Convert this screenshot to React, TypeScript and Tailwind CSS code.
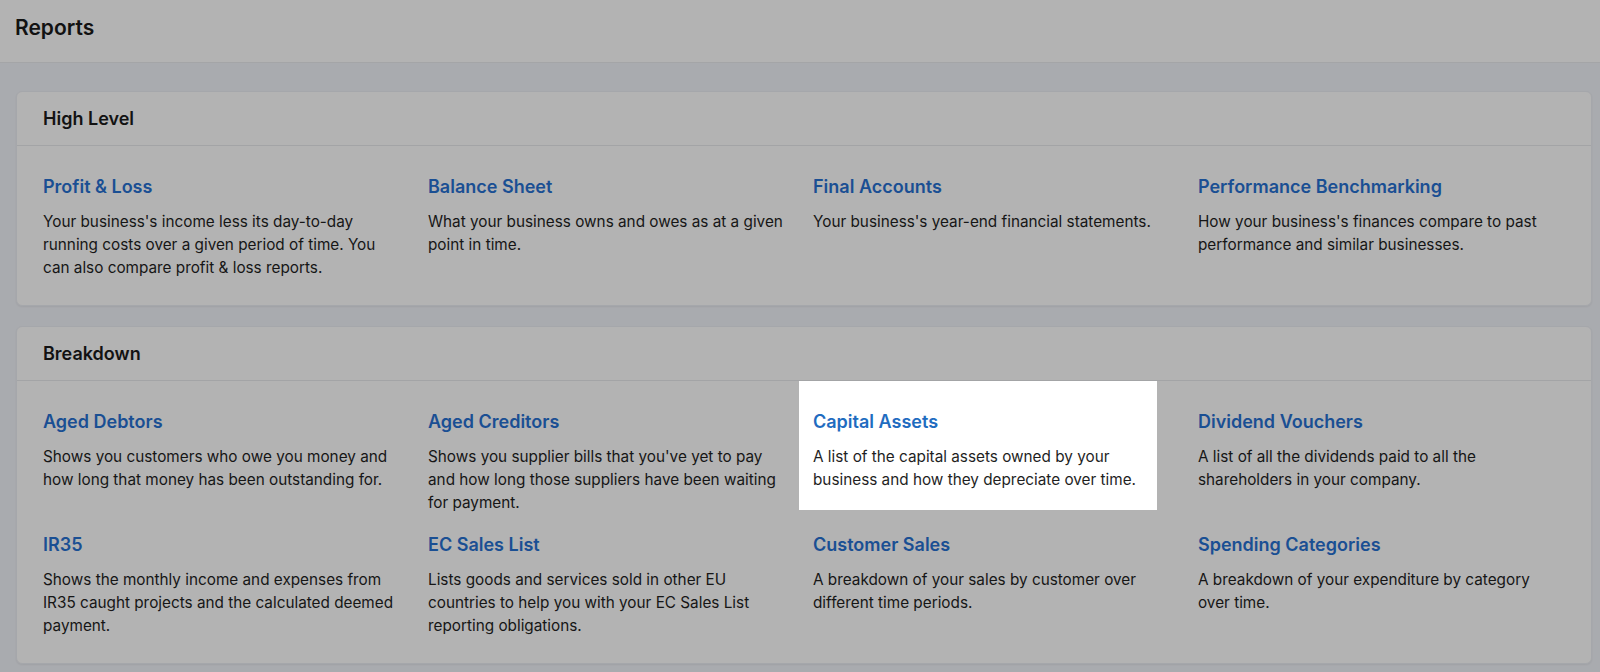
type Report = {
  title: string;
  lines: string[];
  highlight?: boolean;
};

const highLevel: Report[] = [
  {
    title: "Profit & Loss",
    lines: [
      "Your business's income less its day-to-day",
      "running costs over a given period of time. You",
      "can also compare profit & loss reports.",
    ],
  },
  {
    title: "Balance Sheet",
    lines: ["What your business owns and owes as at a given", "point in time."],
  },
  {
    title: "Final Accounts",
    lines: ["Your business's year-end financial statements."],
  },
  {
    title: "Performance Benchmarking",
    lines: ["How your business's finances compare to past", "performance and similar businesses."],
  },
];

const breakdown: Report[] = [
  {
    title: "Aged Debtors",
    lines: ["Shows you customers who owe you money and", "how long that money has been outstanding for."],
  },
  {
    title: "Aged Creditors",
    lines: [
      "Shows you supplier bills that you've yet to pay",
      "and how long those suppliers have been waiting",
      "for payment.",
    ],
  },
  {
    title: "Capital Assets",
    lines: ["A list of the capital assets owned by your", "business and how they depreciate over time."],
    highlight: true,
  },
  {
    title: "Dividend Vouchers",
    lines: ["A list of all the dividends paid to all the", "shareholders in your company."],
  },
  {
    title: "IR35",
    lines: [
      "Shows the monthly income and expenses from",
      "IR35 caught projects and the calculated deemed",
      "payment.",
    ],
  },
  {
    title: "EC Sales List",
    lines: [
      "Lists goods and services sold in other EU",
      "countries to help you with your EC Sales List",
      "reporting obligations.",
    ],
  },
  {
    title: "Customer Sales",
    lines: ["A breakdown of your sales by customer over", "different time periods."],
  },
  {
    title: "Spending Categories",
    lines: ["A breakdown of your expenditure by category", "over time."],
  },
];

function ReportItem({ report }: { report: Report }) {
  return (
    <div className="relative pr-3">
      {report.highlight && (
        <div className="absolute left-[-14px] top-[-29px] w-[358px] h-[129px] bg-white" />
      )}
      <div className="relative">
        <a
          href="#"
          className={`block text-[18px] leading-[24px] font-semibold whitespace-nowrap ${
            report.highlight ? "text-[#1f6cc0]" : "text-[#1a4f93]"
          }`}
        >
          {report.title}
        </a>
        <p
          className={`mt-[11px] text-[15.3px] leading-[23px] whitespace-nowrap ${
            report.highlight ? "text-[#1f1f1f]" : "text-[#161616]"
          }`}
        >
          {report.lines.map((line, i) => (
            <span key={i} className="block">
              {line}
            </span>
          ))}
        </p>
      </div>
    </div>
  );
}

function Section({ title, reports }: { title: string; reports: Report[] }) {
  return (
    <section className="rounded-[6px] border border-[#a5a7ab] bg-[#b3b3b3] shadow-[0_1px_2px_rgba(0,0,0,0.06)]">
      <div className="h-[54px] flex items-center px-[26px] border-b border-[#a3a4a6]">
        <h2 className="text-[18px] font-semibold text-[#121212]">{title}</h2>
      </div>
      <div className="pl-[26px] pt-[29px] pb-[26px]">
        <div className="grid grid-cols-[repeat(4,385px)] gap-y-[19px]">
          {reports.map((r) => (
            <ReportItem key={r.title} report={r} />
          ))}
        </div>
      </div>
    </section>
  );
}

export default function App() {
  return (
    <div
      className="min-h-[672px] bg-[#a9abaf] text-[#141414]"
      style={{ fontFamily: "Inter, 'Noto Sans', sans-serif" }}
    >
      <header className="h-[63px] px-[15px] pt-[14px] bg-[#b3b3b3] border-b border-[#a4a5a7]">
        <h1 className="text-[21px] leading-[28px] font-semibold text-[#121212]">Reports</h1>
      </header>
      <main className="px-[16px] pt-[28px] pb-[10px] pr-[8px] flex flex-col gap-[20px]">
        <Section title="High Level" reports={highLevel} />
        <Section title="Breakdown" reports={breakdown} />
      </main>
    </div>
  );
}
